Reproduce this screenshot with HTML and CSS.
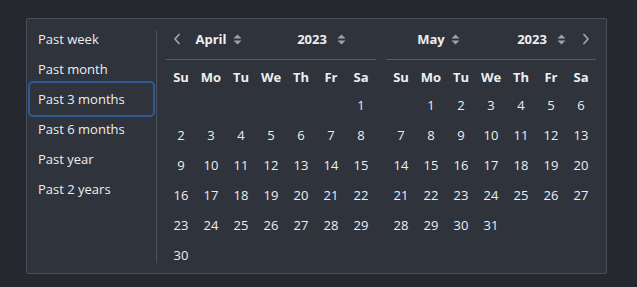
FILE: index.html
```html
<!DOCTYPE html>
<html>
<head>
<meta charset="utf-8">
<link rel="stylesheet" href="styles.css">
</head>
<body>
<div class="panel">
  <ul class="presets">
    <li class="preset">Past week</li>
    <li class="preset">Past month</li>
    <li class="preset active">Past 3 months</li>
    <li class="preset">Past 6 months</li>
    <li class="preset">Past year</li>
    <li class="preset">Past 2 years</li>
  </ul>
  <div class="divider"></div>
  <div class="calendars">
    <div class="cal">
      <div class="cal-head">
        <svg class="nav nav-prev" width="8" height="12" viewBox="0 0 8 12"><path d="M6 1.5 L2 6 L6 10.5" fill="none" stroke="#9ea2aa" stroke-width="1.8" stroke-linecap="round" stroke-linejoin="round"/></svg>
        <div class="half"><span class="sel">April</span><svg class="updown" width="9" height="11" viewBox="0 0 9 11"><path d="M4.5 0.5 L8.5 4.5 L0.5 4.5 Z M0.5 6.5 L8.5 6.5 L4.5 10.5 Z" fill="#9ea2aa"/></svg></div>
        <div class="half year"><span class="sel">2023</span><svg class="updown" width="9" height="11" viewBox="0 0 9 11"><path d="M4.5 0.5 L8.5 4.5 L0.5 4.5 Z M0.5 6.5 L8.5 6.5 L4.5 10.5 Z" fill="#9ea2aa"/></svg></div>
      </div>
      <div class="grid">
        <div class="wd">Su</div><div class="wd">Mo</div><div class="wd">Tu</div><div class="wd">We</div><div class="wd">Th</div><div class="wd">Fr</div><div class="wd">Sa</div>
        <div></div><div></div><div></div><div></div><div></div><div></div><div class="d">1</div>
        <div class="d">2</div><div class="d">3</div><div class="d">4</div><div class="d">5</div><div class="d">6</div><div class="d">7</div><div class="d">8</div>
        <div class="d">9</div><div class="d">10</div><div class="d">11</div><div class="d">12</div><div class="d">13</div><div class="d">14</div><div class="d">15</div>
        <div class="d">16</div><div class="d">17</div><div class="d">18</div><div class="d">19</div><div class="d">20</div><div class="d">21</div><div class="d">22</div>
        <div class="d">23</div><div class="d">24</div><div class="d">25</div><div class="d">26</div><div class="d">27</div><div class="d">28</div><div class="d">29</div>
        <div class="d">30</div>
      </div>
    </div>
    <div class="cal">
      <div class="cal-head">
        <div class="half"><span class="sel">May</span><svg class="updown" width="9" height="11" viewBox="0 0 9 11"><path d="M4.5 0.5 L8.5 4.5 L0.5 4.5 Z M0.5 6.5 L8.5 6.5 L4.5 10.5 Z" fill="#9ea2aa"/></svg></div>
        <div class="half year"><span class="sel">2023</span><svg class="updown" width="9" height="11" viewBox="0 0 9 11"><path d="M4.5 0.5 L8.5 4.5 L0.5 4.5 Z M0.5 6.5 L8.5 6.5 L4.5 10.5 Z" fill="#9ea2aa"/></svg></div>
        <svg class="nav nav-next" width="8" height="12" viewBox="0 0 8 12"><path d="M2 1.5 L6 6 L2 10.5" fill="none" stroke="#9ea2aa" stroke-width="1.8" stroke-linecap="round" stroke-linejoin="round"/></svg>
      </div>
      <div class="grid">
        <div class="wd">Su</div><div class="wd">Mo</div><div class="wd">Tu</div><div class="wd">We</div><div class="wd">Th</div><div class="wd">Fr</div><div class="wd">Sa</div>
        <div></div><div class="d">1</div><div class="d">2</div><div class="d">3</div><div class="d">4</div><div class="d">5</div><div class="d">6</div>
        <div class="d">7</div><div class="d">8</div><div class="d">9</div><div class="d">10</div><div class="d">11</div><div class="d">12</div><div class="d">13</div>
        <div class="d">14</div><div class="d">15</div><div class="d">16</div><div class="d">17</div><div class="d">18</div><div class="d">19</div><div class="d">20</div>
        <div class="d">21</div><div class="d">22</div><div class="d">23</div><div class="d">24</div><div class="d">25</div><div class="d">26</div><div class="d">27</div>
        <div class="d">28</div><div class="d">29</div><div class="d">30</div><div class="d">31</div>
      </div>
    </div>
  </div>
</div>
</body>
</html>
```
FILE: styles.css
```css
html, body {
  margin: 0;
  padding: 0;
}
body {
  background: #25282f;
  font-family: "Open Sans", "Noto Sans", sans-serif;
  font-size: 13px;
  color: #eceef1;
  width: 637px;
  height: 287px;
  padding: 18px 0 0 26px;
  box-sizing: border-box;
}
.panel {
  display: flex;
  width: 581px;
  height: 256px;
  box-sizing: border-box;
  background: #2f333b;
  border: 1px solid #4a4e57;
  border-radius: 2px;
}
.presets {
  list-style: none;
  margin: 0;
  padding: 5px 4px 0 4px;
  width: 129px;
  box-sizing: border-box;
}
.preset {
  position: relative;
  height: 30px;
  line-height: 30px;
  padding-left: 7px;
  white-space: nowrap;
}
.preset.active::after {
  content: "";
  position: absolute;
  inset: -3px -3px -3px -3px;
  border: 2px solid #305a96;
  border-radius: 5px;
}
.divider {
  width: 1px;
  background: #4c5059;
  margin: 11px 0 10px 0;
}
.calendars {
  display: flex;
  gap: 10px;
  margin-left: 9px;
  padding-top: 5px;
}
.cal {
  width: 210px;
}
.cal-head {
  position: relative;
  display: flex;
  height: 30px;
  padding-bottom: 5px;
  border-bottom: 1px solid #585c65;
}
.half {
  flex: 1;
  display: flex;
  align-items: center;
  justify-content: center;
  gap: 6px;
}
.half.year {
  gap: 10px;
}
.half.year .updown {
  margin-right: 4px;
}
.sel {
  font-weight: 700;
}
.updown {
  display: block;
}
.nav {
  position: absolute;
  top: 9px;
}
.nav-prev { left: 7px; }
.nav-next { right: 6px; }
.grid {
  display: grid;
  grid-template-columns: repeat(7, 30px);
  grid-auto-rows: 30px;
  grid-template-rows: 26px;
  padding-top: 4px;
}
.grid > div {
  display: flex;
  align-items: center;
  justify-content: center;
}
.wd {
  font-weight: 700;
}
```
